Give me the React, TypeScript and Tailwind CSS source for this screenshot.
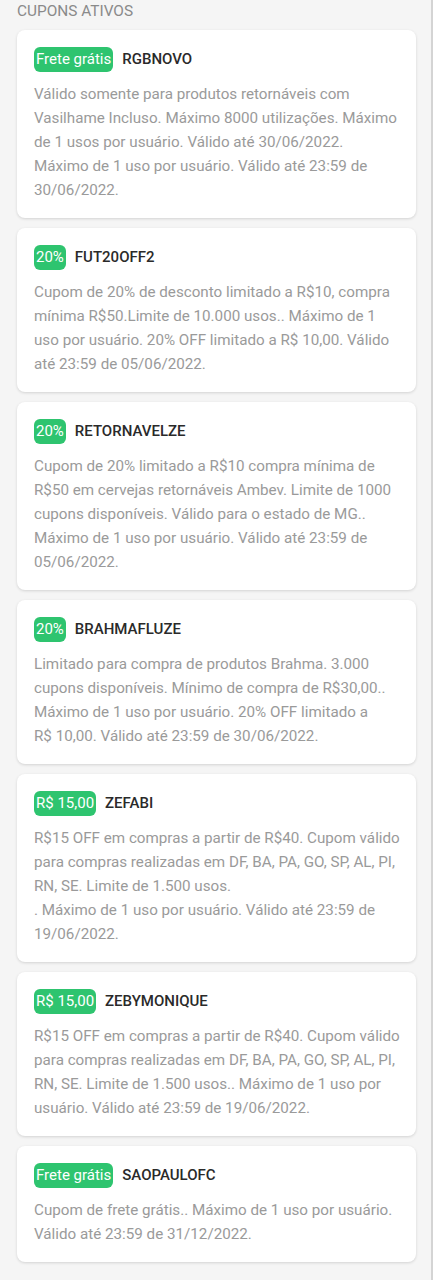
import React from "react";

type Coupon = { badge: string; code: string; lines: string[] };

const coupons: Coupon[] = [
  {
    badge: "Frete grátis",
    code: "RGBNOVO",
    lines: [
      "Válido somente para produtos retornáveis com",
      "Vasilhame Incluso. Máximo 8000 utilizações. Máximo",
      "de 1 usos por usuário. Válido até 30/06/2022.",
      "Máximo de 1 uso por usuário. Válido até 23:59 de",
      "30/06/2022.",
    ],
  },
  {
    badge: "20%",
    code: "FUT20OFF2",
    lines: [
      "Cupom de 20% de desconto limitado a R$10, compra",
      "mínima R$50.Limite de 10.000 usos.. Máximo de 1",
      "uso por usuário. 20% OFF limitado a R$ 10,00. Válido",
      "até 23:59 de 05/06/2022.",
    ],
  },
  {
    badge: "20%",
    code: "RETORNAVELZE",
    lines: [
      "Cupom de 20% limitado a R$10 compra mínima de",
      "R$50 em cervejas retornáveis Ambev. Limite de 1000",
      "cupons disponíveis. Válido para o estado de MG..",
      "Máximo de 1 uso por usuário. Válido até 23:59 de",
      "05/06/2022.",
    ],
  },
  {
    badge: "20%",
    code: "BRAHMAFLUZE",
    lines: [
      "Limitado para compra de produtos Brahma. 3.000",
      "cupons disponíveis. Mínimo de compra de R$30,00..",
      "Máximo de 1 uso por usuário. 20% OFF limitado a",
      "R$ 10,00. Válido até 23:59 de 30/06/2022.",
    ],
  },
  {
    badge: "R$ 15,00",
    code: "ZEFABI",
    lines: [
      "R$15 OFF em compras a partir de R$40. Cupom válido",
      "para compras realizadas em DF, BA, PA, GO, SP, AL, PI,",
      "RN, SE. Limite de 1.500 usos.",
      ". Máximo de 1 uso por usuário. Válido até 23:59 de",
      "19/06/2022.",
    ],
  },
  {
    badge: "R$ 15,00",
    code: "ZEBYMONIQUE",
    lines: [
      "R$15 OFF em compras a partir de R$40. Cupom válido",
      "para compras realizadas em DF, BA, PA, GO, SP, AL, PI,",
      "RN, SE. Limite de 1.500 usos.. Máximo de 1 uso por",
      "usuário. Válido até 23:59 de 19/06/2022.",
    ],
  },
  {
    badge: "Frete grátis",
    code: "SAOPAULOFC",
    lines: ["Cupom de frete grátis.. Máximo de 1 uso por usuário.", "Válido até 23:59 de 31/12/2022."],
  },
];

export default function App() {
  return (
    <div
      className="min-h-[1280px] w-[433px] bg-[#f5f5f5] border-r-2 border-[#d4d4d4]"
      style={{ fontFamily: "Roboto, 'Noto Sans', Arial, sans-serif" }}
    >
      <div className="pl-[17px] pr-[15px] pt-[2px]">
        <div className="text-[15.4px] leading-[18px] text-[#8a8a8a] uppercase">Cupons ativos</div>
        <div className="mt-[10px] flex flex-col gap-[10px]">
          {coupons.map((c) => (
            <div
              key={c.code}
              className="rounded-[8px] bg-white px-[17px] pt-[17px] pb-[16px] shadow-[0_1px_3px_rgba(0,0,0,0.14)]"
            >
              <div className="flex items-center gap-[9px]">
                <span className="flex h-[25px] items-center rounded-[6px] bg-[#2ec46f] px-[2px] text-[15px] text-white">
                  {c.badge}
                </span>
                <span className="text-[15px] font-medium text-[#2a2a2a]">{c.code}</span>
              </div>
              <div className="mt-[10px] text-[15.2px] leading-[24px] text-[#9a9a9a]">
                {c.lines.map((d, i) => (
                  <div key={i} className="whitespace-nowrap">
                    {d}
                  </div>
                ))}
              </div>
            </div>
          ))}
        </div>
      </div>
    </div>
  );
}
